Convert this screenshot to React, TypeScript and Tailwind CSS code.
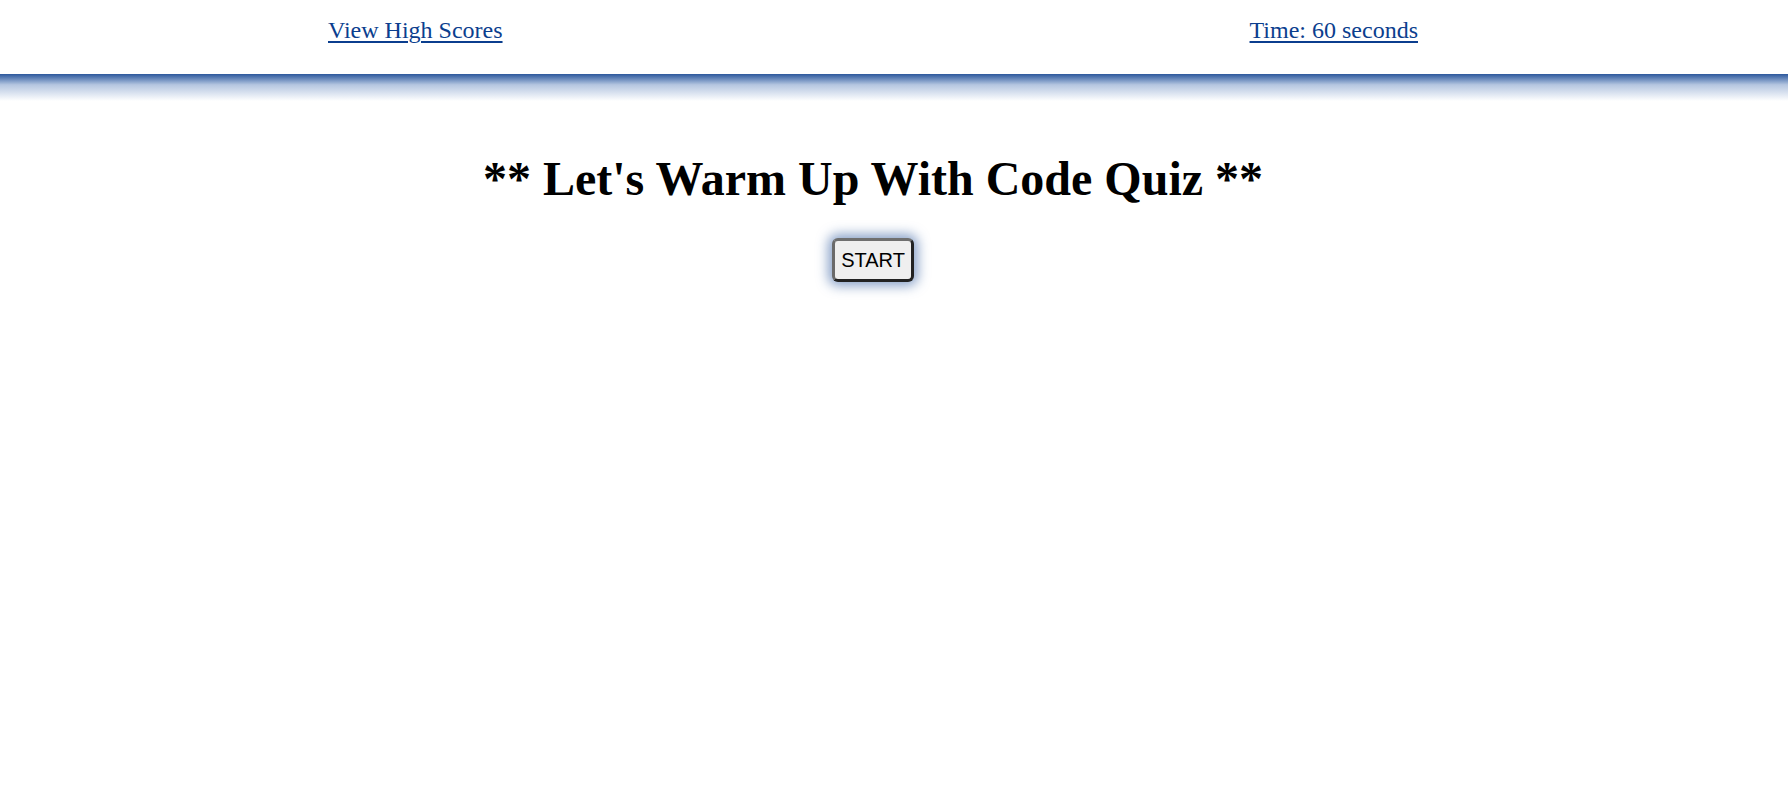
import React from "react";

export default function App() {
  return (
    <div className="min-h-[802px] bg-white" style={{ fontFamily: '"Liberation Serif", "Times New Roman", serif' }}>
      <div className="w-[1746px]">
        <header className="h-[74px] flex justify-between px-[328px] pt-[16px]">
          <a href="#" className="text-[24px] leading-[28px] text-[#0b3e8e] underline underline-offset-[3px] decoration-[2px] h-[28px]">
            View High Scores
          </a>
          <a href="#" className="text-[24px] leading-[28px] text-[#0b3e8e] underline underline-offset-[3px] decoration-[2px] h-[28px]">
            Time: 60 seconds
          </a>
        </header>
      </div>
      <div className="h-[27px] bg-gradient-to-b from-[#2c589c] via-[#b5c6e0] via-40% to-white"></div>
      <main className="w-[1746px] flex flex-col items-center">
        <h1 className="mt-[50px] text-[48px] leading-[56px] font-bold text-black">
          ** Let's Warm Up With Code Quiz **
        </h1>
        <button
          className="mt-[31px] px-[6px] py-[8px] text-[20px] leading-[22px] text-black bg-[#efefef] rounded-[6px] border-[3px] border-t-[#6f6f6f] border-l-[#6a6a6a] border-r-[#222] border-b-[#222] shadow-[0_0_12px_4px_rgba(44,88,156,0.55)]"
          style={{ fontFamily: '"Liberation Sans", Arial, sans-serif' }}
        >
          START
        </button>
      </main>
    </div>
  );
}
